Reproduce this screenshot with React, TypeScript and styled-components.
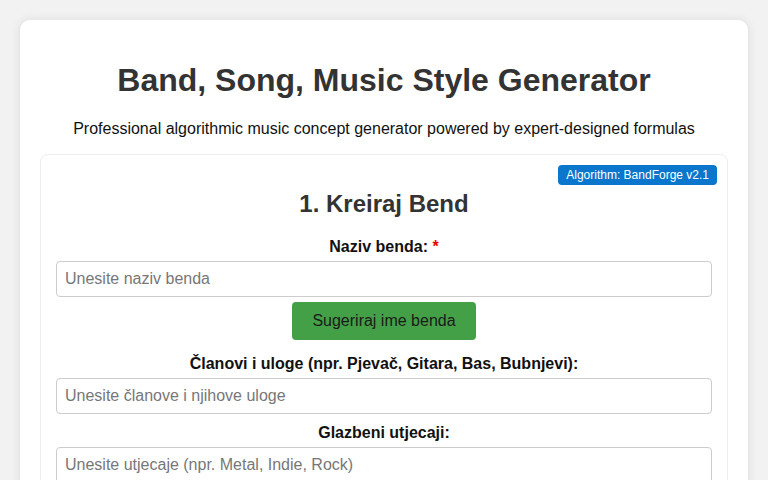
import React from "react";
import styled, { createGlobalStyle } from "styled-components";

const Global = createGlobalStyle`
  html, body { margin: 0; padding: 0; }
  body {
    background: #f2f2f2;
    font-family: "Liberation Sans", Arial, sans-serif;
    color: #333;
    padding: 20px;
  }
  * { box-sizing: border-box; }
`;

const Card = styled.div`
  background: #fff;
  border-radius: 10px;
  box-shadow: 0 0 10px rgba(0, 0, 0, 0.1);
  padding: 20px;
`;

const Title = styled.h1`
  font-size: 32px;
  font-weight: bold;
  text-align: center;
  color: #333;
  margin: 22px 0 21px;
`;

const Subtitle = styled.p`
  font-size: 16px;
  text-align: center;
  color: #111;
  margin: 0 0 16px;
`;

const Section = styled.section`
  position: relative;
  border: 1px solid #eee;
  border-radius: 8px;
  padding: 15px;
`;

const Badge = styled.span`
  position: absolute;
  top: 10px;
  right: 10px;
  background: #0a76cc;
  color: #fff;
  font-size: 12px;
  line-height: 14px;
  padding: 3px 8px;
  border-radius: 4px;
`;

const SectionTitle = styled.h2`
  font-size: 24px;
  font-weight: bold;
  text-align: center;
  color: #333;
  margin: 20px 0;
`;

const Group = styled.div`
  display: flex;
  flex-direction: column;
  align-items: center;
  margin-bottom: 10px;
`;

const Label = styled.label`
  display: block;
  font-size: 16px;
  font-weight: bold;
  color: #111;
  margin-bottom: 5px;
  text-align: center;
`;

const Req = styled.span`
  color: #e00;
`;

const Input = styled.input`
  width: 100%;
  height: 36px;
  padding: 8px;
  font-size: 16px;
  font-family: "Liberation Sans", Arial, sans-serif;
  border: 1px solid #ccc;
  border-radius: 4px;
  color: #333;
  &::placeholder { color: #777; }
`;

const Button = styled.button`
  margin-top: 5px;
  margin-bottom: 5px;
  background: #43a047;
  color: #1a1a1a;
  border: none;
  border-radius: 4px;
  padding: 10px 20px;
  font-size: 16px;
  line-height: 18px;
  font-family: "Liberation Sans", Arial, sans-serif;
  cursor: pointer;
`;

export default function App() {
  return (
    <>
      <Global />
      <Card>
        <Title>Band, Song, Music Style Generator</Title>
        <Subtitle>
          Professional algorithmic music concept generator powered by expert-designed formulas
        </Subtitle>
        <Section>
          <Badge>Algorithm: BandForge v2.1</Badge>
          <SectionTitle>1. Kreiraj Bend</SectionTitle>
          <Group>
            <Label>
              Naziv benda: <Req>*</Req>
            </Label>
            <Input placeholder="Unesite naziv benda" />
            <Button>Sugeriraj ime benda</Button>
          </Group>
          <Group>
            <Label>Članovi i uloge (npr. Pjevač, Gitara, Bas, Bubnjevi):</Label>
            <Input placeholder="Unesite članove i njihove uloge" />
          </Group>
          <Group>
            <Label>Glazbeni utjecaji:</Label>
            <Input placeholder="Unesite utjecaje (npr. Metal, Indie, Rock)" />
          </Group>
        </Section>
      </Card>
    </>
  );
}
